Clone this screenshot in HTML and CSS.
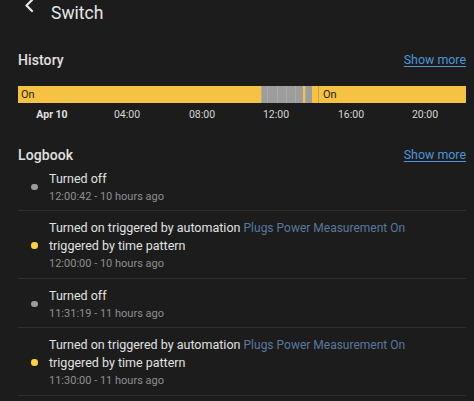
FILE: index.html
```html
<!DOCTYPE html>
<html>
<head>
<meta charset="utf-8">
<link rel="stylesheet" href="styles.css">
</head>
<body>
<div class="dialog">
  <header class="top">
    <svg class="back" width="12" height="14" viewBox="0 0 12 14"><polyline points="9,1 3.5,6.5 9,12" fill="none" stroke="#e8e8e8" stroke-width="2.2" stroke-linecap="round" stroke-linejoin="round"/></svg>
    <span class="title">Switch</span>
  </header>

  <section class="history">
    <div class="sec-head">
      <span class="sec-title">History</span>
      <a class="more" href="#">Show more</a>
    </div>
    <div class="chart">
      <div class="bar">
        <div class="seg on" style="width:243px"><span>On</span></div>
        <div class="seg off" style="width:6px"></div>
        <div class="seg off" style="width:10px"></div>
        <div class="seg off" style="width:9px"></div>
        <div class="seg off" style="width:9px"></div>
        <div class="seg off" style="width:8px"></div>
        <div class="seg on" style="width:2px"></div>
        <div class="seg off" style="width:7px"></div>
        <div class="seg on" style="width:6px"></div>
        <div class="seg dim" style="width:1px"></div>
        <div class="seg on last" style="width:147px"><span>On</span></div>
      </div>
      <div class="axis">
        <span class="tick bold" style="left:34px">Apr 10</span>
        <span class="tick" style="left:109px">04:00</span>
        <span class="tick" style="left:184px">08:00</span>
        <span class="tick" style="left:258px">12:00</span>
        <span class="tick" style="left:333px">16:00</span>
        <span class="tick" style="left:407px">20:00</span>
      </div>
    </div>
  </section>

  <section class="logbook">
    <div class="sec-head">
      <span class="sec-title">Logbook</span>
      <a class="more" href="#">Show more</a>
    </div>
    <ul class="entries">
      <li class="entry">
        <span class="dot grey"></span>
        <div class="body">
          <div class="msg">Turned off</div>
          <div class="time">12:00:42 - 10 hours ago</div>
        </div>
      </li>
      <li class="entry">
        <span class="dot yellow"></span>
        <div class="body">
          <div class="msg">Turned on triggered by automation <a class="auto" href="#">Plugs Power Measurement On</a><br>triggered by time pattern</div>
          <div class="time">12:00:00 - 10 hours ago</div>
        </div>
      </li>
      <li class="entry">
        <span class="dot grey"></span>
        <div class="body">
          <div class="msg">Turned off</div>
          <div class="time">11:31:19 - 11 hours ago</div>
        </div>
      </li>
      <li class="entry">
        <span class="dot yellow"></span>
        <div class="body">
          <div class="msg">Turned on triggered by automation <a class="auto" href="#">Plugs Power Measurement On</a><br>triggered by time pattern</div>
          <div class="time">11:30:00 - 11 hours ago</div>
        </div>
      </li>
    </ul>
  </section>
</div>
</body>
</html>
```

FILE: styles.css
```css
html, body {
  margin: 0;
  padding: 0;
  background: #1c1c1c;
}
body {
  font-family: Roboto, "Noto Sans", sans-serif;
  color: #e1e1e1;
  width: 474px;
  height: 401px;
  overflow: hidden;
}
.dialog {
  padding: 0 8px 0 18px;
}
.top {
  display: flex;
  align-items: flex-start;
  height: 24px;
}
.back {
  margin-left: 5px;
  margin-top: -1px;
  flex: none;
}
.title {
  margin-left: 16px;
  font-size: 17.5px;
  line-height: 26px;
  color: #e6e6e6;
}
.sec-head {
  display: flex;
  justify-content: space-between;
  align-items: center;
  height: 14px;
}
.history .sec-head {
  margin-top: 28.5px;
}
.sec-title {
  font-size: 14px;
  font-weight: 500;
  line-height: 14px;
  color: #e1e1e1;
  letter-spacing: 0.1px;
}
.more {
  font-size: 12.4px;
  line-height: 14px;
  color: #4b97d8;
  text-decoration: underline;
  text-underline-offset: 2px;
}
.chart {
  margin-top: 19.5px;
}
.bar {
  display: flex;
  height: 17px;
  width: 448px;
}
.seg {
  height: 100%;
  flex: none;
  box-sizing: border-box;
}
.seg.on {
  background: #f5c244;
}
.seg.off {
  background: #9d9d9d;
  box-shadow: inset 1px 0 #aaaaaa;
}
.seg.dim {
  background: #c9a540;
}
.seg span {
  display: block;
  font-size: 11px;
  line-height: 17px;
  padding-left: 3px;
  color: #2a2208;
}
.seg.last span {
  padding-left: 4px;
}
.axis {
  position: relative;
  height: 22px;
}
.tick {
  position: absolute;
  top: 5px;
  transform: translateX(-50%);
  font-size: 10.5px;
  line-height: 13px;
  color: #d6d6d6;
  white-space: nowrap;
}
.tick.bold {
  font-weight: 700;
  color: #e1e1e1;
}
.logbook .sec-head {
  margin-top: 22.5px;
}
.entries {
  list-style: none;
  margin: 0;
  padding: 0;
}
.entry {
  display: flex;
  align-items: center;
  padding: 8px 0 5.5px 13px;
  border-bottom: 1px solid #2e2e2e;
}
.dot {
  width: 6.5px;
  height: 6.5px;
  border-radius: 50%;
  flex: none;
  margin-right: 11.5px;
}
.dot.grey {
  background: #9c9c9c;
}
.dot.yellow {
  background: #fdd23c;
}
.body {
  flex: 1;
  min-width: 0;
}
.msg {
  font-size: 12.5px;
  line-height: 18px;
  color: #e1e1e1;
}
.auto {
  font-size: 12px;
  color: #58789e;
  text-decoration: none;
}
.time {
  font-size: 11px;
  line-height: 17px;
  color: #8f8f8f;
}
```
